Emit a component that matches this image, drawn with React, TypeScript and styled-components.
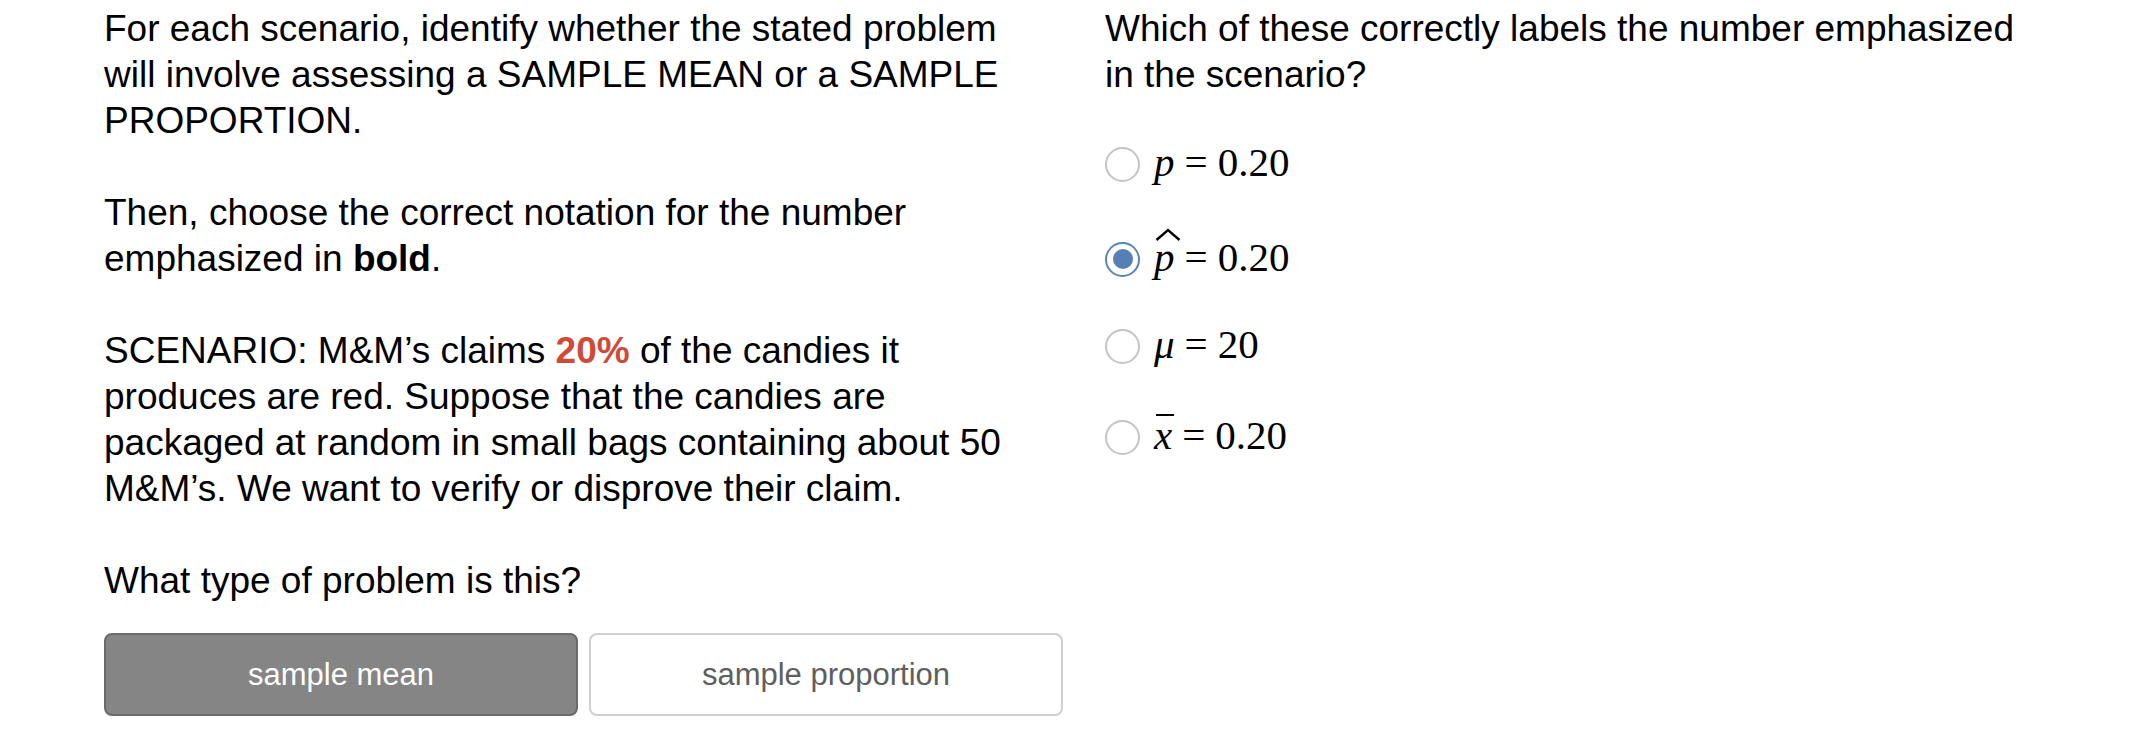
import React from 'react';
import styled, { createGlobalStyle } from 'styled-components';

const GlobalStyle = createGlobalStyle`
  html, body {
    margin: 0;
    padding: 0;
    background: #ffffff;
  }
  body {
    font-family: "Liberation Sans", Arial, Helvetica, sans-serif;
    color: #000000;
  }
`

const Page = styled.div`
  display: grid;
  grid-template-columns: 959px 930px;
  column-gap: 42px;
  padding: 6px 0 0 104px;
  width: 2136px;
  height: 748px;
  box-sizing: border-box;
`

const Column = styled.div`
  display: flex;
  flex-direction: column;
`

const Paragraph = styled.p`
  margin: 0 0 46px 0;
  max-width: 940px;
  font-size: 37px;
  line-height: 46px;

  &:last-of-type {
    margin-bottom: 0;
  }
`

const Bold = styled.b`
  font-weight: 700;
`

const Highlight = styled.b`
  font-weight: 700;
  color: #d04a38;
`

const ButtonRow = styled.div`
  display: grid;
  grid-template-columns: 474px 474px;
  column-gap: 11px;
  margin-top: 29px;
`

const ChoiceButton = styled.button<{ $selected?: boolean }>`
  height: 83px;
  border-radius: 8px;
  border: 2px solid ${p => (p.$selected ? '#6b6b6b' : '#cfcfcf')};
  background: ${p => (p.$selected ? '#858585' : '#ffffff')};
  color: ${p => (p.$selected ? '#ffffff' : '#5e5e5e')};
  font-family: "Liberation Sans", Arial, sans-serif;
  font-size: 31px;
  padding: 0;
  cursor: pointer;
`

const Question = styled.p`
  margin: 0;
  font-size: 37px;
  line-height: 46px;
`

const Options = styled.div`
  display: flex;
  flex-direction: column;
`

const Option = styled.label<{ $top: number }>`
  display: flex;
  align-items: center;
  height: 46px;
  margin-top: ${p => p.$top}px;
  cursor: pointer;
`

const Radio = styled.span<{ $checked?: boolean }>`
  display: flex;
  align-items: center;
  justify-content: center;
  width: 35px;
  height: 35px;
  box-sizing: border-box;
  border-radius: 50%;
  border: 2px solid ${p => (p.$checked ? '#5a84b8' : '#c4c4c4')};
  background: #ffffff;
  margin-right: 14px;

  &::after {
    content: '';
    display: ${p => (p.$checked ? 'block' : 'none')};
    width: 20px;
    height: 20px;
    border-radius: 50%;
    background: #5580b5;
  }
`

const Math = styled.span`
  display: inline-flex;
  align-items: baseline;
  font-family: "Liberation Serif", "Times New Roman", serif;
  font-size: 41px;
  line-height: 1;
  margin-top: -4px;
`

const Var = styled.i`
  position: relative;
  font-style: italic;
`

const Hat = styled.span`
  position: absolute;
  left: 1px;
  top: -9px;
  width: 26px;
  height: 13px;

  svg {
    display: block;
  }
`

const Bar = styled.span`
  position: absolute;
  left: 2px;
  top: -1px;
  width: 18px;
  height: 2px;
  background: #000000;
`

const Equals = styled.span`
  margin: 0 10px;
`

export default function App() {
  return (
    <>
      <GlobalStyle />
      <Page>
        <Column>
          <Paragraph>
            For each scenario, identify whether the stated problem will involve assessing a SAMPLE MEAN or a SAMPLE PROPORTION.
          </Paragraph>
          <Paragraph>
            Then, choose the correct notation for the number emphasized in <Bold>bold</Bold>.
          </Paragraph>
          <Paragraph>
            SCENARIO: M&amp;M’s claims <Highlight>20%</Highlight> of the candies it produces are red. Suppose that the candies are packaged at random in small bags containing about 50 M&amp;M’s. We want to verify or disprove their claim.
          </Paragraph>
          <Paragraph>What type of problem is this?</Paragraph>
          <ButtonRow>
            <ChoiceButton $selected>sample mean</ChoiceButton>
            <ChoiceButton>sample proportion</ChoiceButton>
          </ButtonRow>
        </Column>
        <Column>
          <Question>Which of these correctly labels the number emphasized in the scenario?</Question>
          <Options>
            <Option $top={43}>
              <Radio />
              <Math>
                <Var>p</Var>
                <Equals>=</Equals>
                0.20
              </Math>
            </Option>
            <Option $top={49}>
              <Radio $checked />
              <Math>
                <Var>
                  p
                  <Hat>
                    <svg width="26" height="13" viewBox="0 0 26 13">
                      <path d="M1.5 12 L13 2 L24.5 12" fill="none" stroke="#000" strokeWidth="2.4" />
                    </svg>
                  </Hat>
                </Var>
                <Equals>=</Equals>
                0.20
              </Math>
            </Option>
            <Option $top={41}>
              <Radio />
              <Math>
                <Var>μ</Var>
                <Equals>=</Equals>
                20
              </Math>
            </Option>
            <Option $top={45}>
              <Radio />
              <Math>
                <Var>
                  x
                  <Bar />
                </Var>
                <Equals>=</Equals>
                0.20
              </Math>
            </Option>
          </Options>
        </Column>
      </Page>
    </>
  );
}
